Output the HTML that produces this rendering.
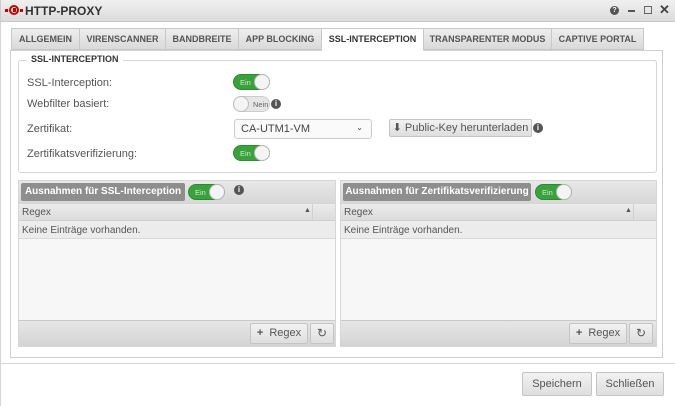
<!DOCTYPE html>
<html><head><meta charset="utf-8"><style>
*{box-sizing:border-box;margin:0;padding:0}
body{width:675px;height:406px;background:#fff;font-family:"Liberation Sans",sans-serif;position:relative;overflow:hidden;color:#555}
.a{position:absolute}
.title{left:0;top:0;width:675px;height:22px;background:linear-gradient(#f0f0f0,#dcdcdc);border-bottom:1px solid #c8c8c8;border-left:1px solid #ccc}
.tab{top:28px;height:22px;background:linear-gradient(#eee,#dadada);border:1px solid #c8c8c8;font-size:9px;font-weight:bold;color:#555;text-align:center;line-height:21px;white-space:nowrap}
.tab.on{background:#fff;border-bottom-color:#fff;color:#333;height:23px}
.lbl{left:27px;font-size:11px;color:#555}
.tg{width:37px;height:16px;border-radius:8px;background:#3aa23c;border:1px solid #2e8a30}
.tg span{position:absolute;left:6px;top:3px;font-size:7.5px;color:#cfe9cf}
.tg i{position:absolute;right:-1px;top:-1px;width:16px;height:16px;border-radius:50%;background:#f4f4f4;border:1px solid #bbb}
.info{width:10px;height:10px;border-radius:50%;background:#555;color:#fff;font-size:8px;font-weight:bold;text-align:center;line-height:10px}
.btn{border:1px solid #c4c4c4;border-radius:2px;background:linear-gradient(#f2f2f2,#dedede);font-size:11px;color:#555;text-align:center;white-space:nowrap}
.panel{top:180px;height:167px;border:1px solid #d6d6d6;background:#f7f7f7}
.hl{top:183px;height:18px;background:#8e8e8e;border-radius:2px;color:#fff;font-size:10px;font-weight:bold;text-align:center;line-height:18px;white-space:nowrap}
</style></head><body>
<div class="a title"></div>
<div class="a" style="left:5px;top:9px;width:3px;height:3px;background:#c00"></div>
<div class="a" style="left:9px;top:5px;width:10px;height:10px;border-radius:50%;border:2px solid #c00"></div>
<div class="a" style="left:12.5px;top:8px;width:3px;height:4px;background:#c00"></div>
<div class="a" style="left:20px;top:9px;width:3px;height:3px;background:#c00"></div>
<div class="a" style="left:25px;top:4px;font-size:12px;font-weight:bold;color:#333">HTTP-PROXY</div>
<div class="a info" style="left:610px;top:6px;width:9px;height:9px;font-size:7px;line-height:9px">?</div>
<div class="a" style="left:628px;top:10px;width:7px;height:2px;background:#555"></div>
<div class="a" style="left:644px;top:6px;width:8px;height:8px;border:1px solid #666"></div>
<div class="a" style="left:659px;top:2px;font-size:13px;font-weight:bold;color:#444">✕</div>
<div class="a" style="left:10px;top:50px;width:653px;height:308px;border:1px solid #d0d0d0"></div>
<div class="a tab" style="left:11px;width:69px">ALLGEMEIN</div>
<div class="a tab" style="left:79px;width:87px">VIRENSCANNER</div>
<div class="a tab" style="left:165px;width:74px">BANDBREITE</div>
<div class="a tab" style="left:238px;width:84px">APP BLOCKING</div>
<div class="a tab on" style="left:321px;width:103px">SSL-INTERCEPTION</div>
<div class="a tab" style="left:423px;width:129px">TRANSPARENTER MODUS</div>
<div class="a tab" style="left:551px;width:93px">CAPTIVE PORTAL</div>
<div class="a" style="left:18px;top:60px;width:639px;height:113px;border:1px solid #d6d6d6;border-radius:3px"></div>
<div class="a" style="left:27px;top:54px;padding:0 4px;background:#fff;font-size:9px;font-weight:bold;color:#333">SSL-INTERCEPTION</div>
<div class="a lbl" style="top:77px">SSL-Interception:</div>
<div class="a lbl" style="top:98px">Webfilter basiert:</div>
<div class="a lbl" style="top:123px">Zertifikat:</div>
<div class="a lbl" style="top:148px">Zertifikatsverifizierung:</div>
<div class="a tg" style="left:233px;top:74px"><span>Ein</span><i></i></div>
<div class="a tg" style="left:233px;top:96px;background:#e6e6e6;border-color:#ccc"><span style="left:19px;color:#666">Nein</span><i style="left:-1px;right:auto"></i></div>
<div class="a info" style="left:271px;top:99px">i</div>
<div class="a tg" style="left:233px;top:145px"><span>Ein</span><i></i></div>
<div class="a" style="left:234px;top:119px;width:138px;height:20px;border:1px solid #ccc;border-radius:3px;background:#fafafa;font-size:11px;color:#444;padding:3px 6px">CA-UTM1-VM<span style="position:absolute;right:8px;top:3px;font-size:8px">⌄</span></div>
<div class="a btn" style="left:389px;top:119px;width:143px;height:18px;line-height:16px">⬇ Public-Key herunterladen</div>
<div class="a info" style="left:533px;top:123px">i</div>

<div class="a panel" style="left:18px;width:318px"></div>
<div class="a panel" style="left:340px;width:317px"></div>
<div class="a" style="left:19px;top:181px;width:316px;height:23px;background:linear-gradient(#e8e8e8,#d6d6d6)"></div>
<div class="a" style="left:341px;top:181px;width:315px;height:23px;background:linear-gradient(#e8e8e8,#d6d6d6)"></div>
<div class="a hl" style="left:21px;width:164px">Ausnahmen für SSL-Interception</div>
<div class="a hl" style="left:343px;width:188px">Ausnahmen für Zertifikatsverifizierung</div>
<div class="a tg" style="left:188px;top:184px"><span>Ein</span><i></i></div>
<div class="a info" style="left:234px;top:185px">i</div>
<div class="a tg" style="left:535px;top:184px"><span>Ein</span><i></i></div>
<div class="a" style="left:19px;top:204px;width:316px;height:17px;background:linear-gradient(#ececec,#dcdcdc);border-bottom:1px solid #d0d0d0;font-size:10px;padding:3px 3px">Regex<span style="position:absolute;left:285px;top:3px;font-size:7px">▲</span><span style="position:absolute;left:293px;top:0;width:1px;height:17px;background:#d0d0d0"></span></div>
<div class="a" style="left:341px;top:204px;width:315px;height:17px;background:linear-gradient(#ececec,#dcdcdc);border-bottom:1px solid #d0d0d0;font-size:10px;padding:3px 3px">Regex<span style="position:absolute;left:284px;top:3px;font-size:7px">▲</span><span style="position:absolute;left:292px;top:0;width:1px;height:17px;background:#d0d0d0"></span></div>
<div class="a" style="left:19px;top:221px;width:316px;height:18px;background:#ececec;border-bottom:1px solid #d8d8d8;font-size:10px;padding:4px 3px">Keine Einträge vorhanden.</div>
<div class="a" style="left:341px;top:221px;width:315px;height:18px;background:#ececec;border-bottom:1px solid #d8d8d8;font-size:10px;padding:4px 3px">Keine Einträge vorhanden.</div>
<div class="a" style="left:19px;top:320px;width:316px;height:26px;background:linear-gradient(#e6e6e6,#d4d4d4);border-top:1px solid #c8c8c8"></div>
<div class="a" style="left:341px;top:320px;width:315px;height:26px;background:linear-gradient(#e6e6e6,#d4d4d4);border-top:1px solid #c8c8c8"></div>
<div class="a btn" style="left:250px;top:323px;width:58px;height:21px;line-height:19px"><b>+</b>&nbsp; Regex</div>
<div class="a btn" style="left:310px;top:323px;width:24px;height:21px;line-height:19px;font-size:12px">↻</div>
<div class="a btn" style="left:569px;top:323px;width:58px;height:21px;line-height:19px"><b>+</b>&nbsp; Regex</div>
<div class="a btn" style="left:629px;top:323px;width:24px;height:21px;line-height:19px;font-size:12px">↻</div>
<div class="a" style="left:0;top:363px;width:675px;height:1px;background:#d4d4d4"></div>
<div class="a" style="left:0;top:22px;width:1px;height:384px;background:#d4d4d4"></div>
<div class="a btn" style="left:522px;top:372px;width:70px;height:24px;line-height:22px">Speichern</div>
<div class="a btn" style="left:596px;top:372px;width:68px;height:24px;line-height:22px">Schließen</div>
</body></html>
